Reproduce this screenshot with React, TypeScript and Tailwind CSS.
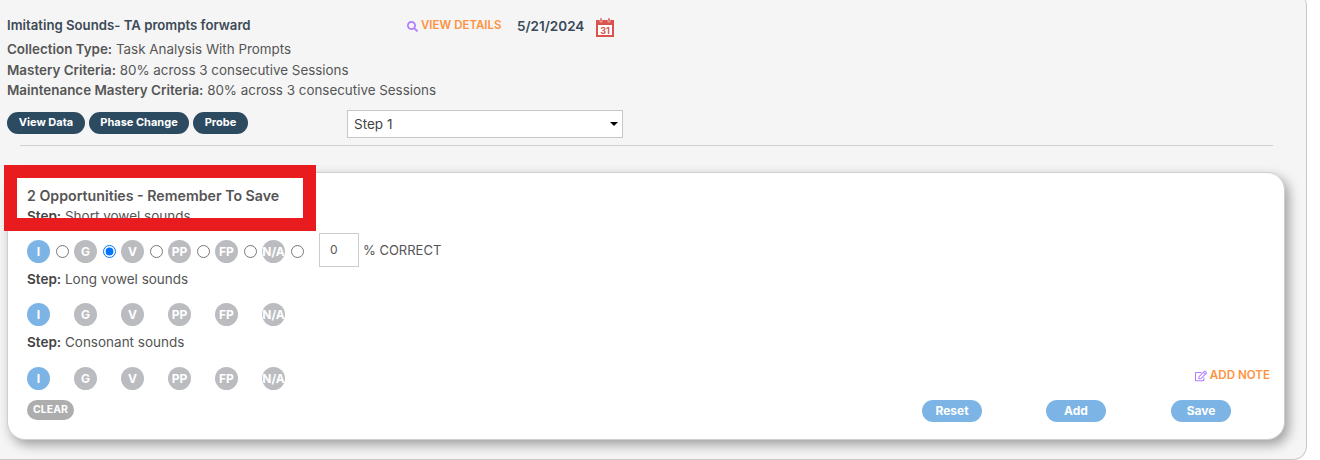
import { FaSearch, FaRegEdit } from "react-icons/fa";

const codes = ["I", "G", "V", "PP", "FP", "N/A"];

function Circle({ label, active }: { label: string; active: boolean }) {
  return (
    <span
      className={`flex h-[23px] w-[23px] shrink-0 items-center justify-center overflow-hidden rounded-full text-[12px] font-bold text-white ${
        active ? "bg-[#7cb5e5]" : "bg-[#bbbcc0]"
      }`}
    >
      {label}
    </span>
  );
}

function Row({ radios, name }: { radios?: boolean; name: string }) {
  return (
    <div className="flex h-[34px] items-center">
      {codes.map((c, i) => (
        <div key={c} className="flex w-[47px] shrink-0 items-center">
          <Circle label={c} active={i === 0} />
          {radios && (
            <input
              type="radio"
              name={name}
              defaultChecked={c === "G"}
              className="m-0 ml-[6px] h-[13px] w-[13px]"
            />
          )}
        </div>
      ))}
      {radios && (
        <div className="-mt-[4px] flex items-center">
          <div className="ml-[10px] flex h-[34px] w-[40px] items-center border border-[#cccccc] bg-white pl-[10px] text-[12px] text-[#555555]">
            0
          </div>
          <span className="mt-[2px] ml-[4px] text-[13px] text-[#555]">% CORRECT</span>
        </div>
      )}
    </div>
  );
}

function Step({ text }: { text: string }) {
  return (
    <div className="h-[20px] text-[13.5px] leading-[20px] text-[#555]">
      <b className="font-semibold text-[#444]">Step:</b> {text}
    </div>
  );
}

function Pill({ children, w }: { children: string; w: string }) {
  return (
    <span className={`flex h-[22px] items-center justify-center rounded-full bg-[#2c4a60] text-[11px] font-bold text-white ${w}`}>
      {children}
    </span>
  );
}

function Blue({ children }: { children: string }) {
  return (
    <span className="flex h-[22px] w-[60px] items-center justify-center rounded-full bg-[#7cb5e5] text-[12px] font-bold text-white">
      {children}
    </span>
  );
}

export default function App() {
  return (
    <div className="relative h-[460px] w-[1320px] overflow-hidden bg-white font-['Inter',sans-serif]">
      <div className="-mt-[8px] h-[468px] w-[1307px] rounded-r-[14px] border-r border-b border-[#c8c8c8] bg-[#f5f5f5] pt-[24px] pl-[7px]">
        <div className="flex h-[20px] items-center">
          <span className="w-[400px] text-[13.2px] font-semibold text-[#3d4a57]">Imitating Sounds- TA prompts forward</span>
          <FaSearch className="h-[11px] w-[11px] text-[#b07cff]" />
          <span className="ml-[3px] w-[96px] text-[11.5px] font-semibold text-[#ff9240]">VIEW DETAILS</span>
          <span className="w-[79px] text-[13.5px] font-semibold text-[#3a4a5a]">5/21/2024</span>
          <svg width="18" height="19" viewBox="0 0 18 19" className="mt-[2px]">
            <rect x="0" y="2" width="18" height="17" fill="#d9534f" />
            <rect x="2" y="7" width="14" height="10" fill="#fff" />
            <rect x="4" y="0" width="2" height="4" fill="#d9534f" stroke="#f5f5f5" strokeWidth="0.5" />
            <rect x="12" y="0" width="2" height="4" fill="#d9534f" stroke="#f5f5f5" strokeWidth="0.5" />
            <text x="9" y="15.5" textAnchor="middle" fontSize="9" fontWeight="700" fill="#d9534f">31</text>
          </svg>
        </div>
        <div className="mt-[3px] text-[13.4px] leading-[20.5px] text-[#555]">
          <div><b className="font-semibold">Collection Type:</b> Task Analysis With Prompts</div>
          <div><b className="font-semibold">Mastery Criteria:</b> 80% across 3 consecutive Sessions</div>
          <div><b className="font-semibold">Maintenance Mastery Criteria:</b> 80% across 3 consecutive Sessions</div>
        </div>
        <div className="mt-[9px] flex items-start">
          <div className="mt-[2px] flex w-[340px] gap-[4px]">
            <Pill w="w-[78px]">View Data</Pill>
            <Pill w="w-[100px]">Phase Change</Pill>
            <Pill w="w-[55px]">Probe</Pill>
          </div>
          <div className="relative">
            <select className="block h-[28px] w-[276px] appearance-none border border-[#c8c8c8] bg-white pt-[2px] pl-[6px] text-[13.5px] text-[#444]">
              <option>Step 1</option>
            </select>
            <span className="pointer-events-none absolute top-[12px] right-[5px] h-0 w-0 border-x-[4px] border-t-[4px] border-x-transparent border-t-black" />
          </div>
        </div>
        <div className="mt-[7px] ml-[13px] h-px w-[1253px] bg-[#cfcfcf]" />
        <div className="mt-[26px] h-[268px] w-[1278px] rounded-[18px] border border-[#cfcfcf] bg-white pt-[13px] pr-[14px] pl-[19px] shadow-[4px_5px_12px_rgba(0,0,0,0.35)]">
          <div className="h-[20px] text-[14.2px] leading-[20px] font-semibold text-[#555]">2 Opportunities - Remember To Save</div>
          <Step text="Short vowel sounds" />
          <div className="mt-[9px]"><Row radios name="a" /></div>
          <Step text="Long vowel sounds" />
          <div className="mt-[9px]"><Row name="b" /></div>
          <Step text="Consonant sounds" />
          <div className="mt-[10px] flex items-center justify-between">
            <Row name="c" />
            <span className="-mt-[5px] flex items-center gap-[3px] text-[11.6px] font-semibold text-[#ff9240]">
              <FaRegEdit className="h-[12px] w-[12px] text-[#b07cff]" />
              ADD NOTE
            </span>
          </div>
          <div className="mt-[4px] flex items-start">
            <span className="flex h-[20px] w-[47px] items-center justify-center rounded-full bg-[#adadad] text-[10.5px] font-bold text-white">CLEAR</span>
            <div className="ml-[848px] flex">
              <Blue>Reset</Blue>
              <div className="ml-[64px]"><Blue>Add</Blue></div>
              <div className="ml-[65px]"><Blue>Save</Blue></div>
            </div>
          </div>
        </div>
      </div>
      <div className="pointer-events-none absolute top-[165px] left-[4px] h-[66px] w-[312px] border-[13px] border-[#e81c1f]" />
    </div>
  );
}
